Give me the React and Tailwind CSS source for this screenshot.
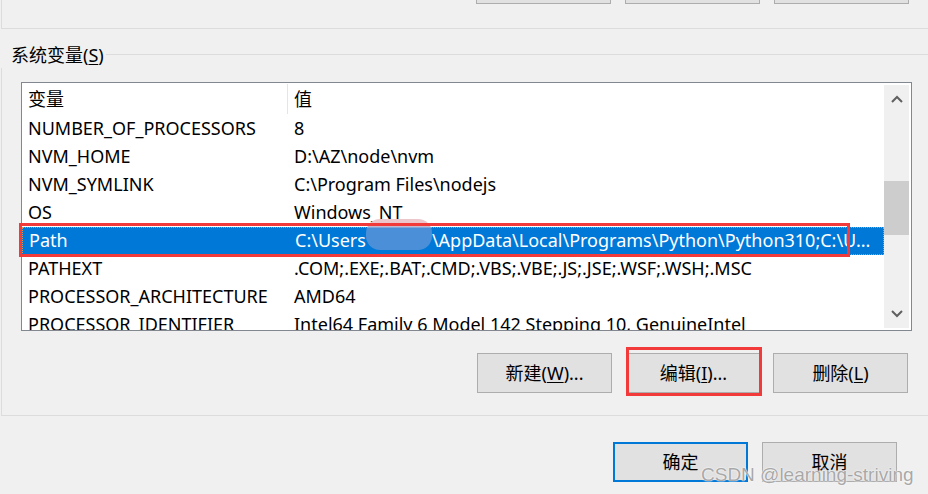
import React from 'react';

const rows = [
  { name: 'NUMBER_OF_PROCESSORS', value: '8' },
  { name: 'NVM_HOME', value: 'D:\\AZ\\node\\nvm' },
  { name: 'NVM_SYMLINK', value: 'C:\\Program Files\\nodejs' },
  { name: 'OS', value: 'Windows_NT' },
  { name: 'Path', value: 'path', selected: true },
  { name: 'PATHEXT', value: '.COM;.EXE;.BAT;.CMD;.VBS;.VBE;.JS;.JSE;.WSF;.WSH;.MSC' },
  { name: 'PROCESSOR_ARCHITECTURE', value: 'AMD64' },
  { name: 'PROCESSOR_IDENTIFIER', value: 'Intel64 Family 6 Model 142 Stepping 10, GenuineIntel' },
];

const Button = ({ children, className = '' }) => (
  <div
    className={`w-[135px] h-[40px] flex items-center justify-center bg-[#e1e1e1] border border-[#adadad] text-[18px] text-black ${className}`}
  >
    {children}
  </div>
);

const Chevron = ({ up }) => (
  <svg width="12" height="8" viewBox="0 0 12 8">
    <path
      d={up ? 'M1 7 L6 2 L11 7' : 'M1 1 L6 6 L11 1'}
      fill="none"
      stroke="#606060"
      strokeWidth="2"
    />
  </svg>
);

export default function App() {
  return (
    <div className="relative w-[928px] h-[494px] overflow-hidden bg-[#f0f0f0] text-black font-['Noto_Sans','Noto_Sans_CJK_SC',sans-serif]">
      {/* previous group (user variables), only its bottom is visible */}
      <div className="h-[29px] ml-[1px] border-l border-b border-[#dcdcdc] flex justify-end pr-[19px]">
        <div className="flex gap-[14px] -mt-[36px]">
          <Button />
          <Button />
          <Button />
        </div>
      </div>

      {/* system variables group */}
      <div className="mt-[25px] ml-[1px] h-[362px] border-t border-l border-b border-[#dcdcdc]">
        <div className="-mt-[13px] -ml-[2px] w-fit h-[26px] leading-[26px] bg-[#f0f0f0] pl-[11px] pr-[2px] text-[18px]">
          系统变量(<span className="underline underline-offset-2">S</span>)
        </div>

        {/* list view */}
        <div className="mt-[14px] ml-[19px] w-[891px] h-[249px] border border-[#828790] bg-white flex">
          <div className="flex-1 h-full overflow-hidden text-[18px]">
            <div className="h-[32px] flex items-center">
              <div className="w-[265px] pl-[6px]">变量</div>
              <div className="w-px h-[30px] bg-[#e5e5e5]" />
              <div className="pl-[6px]">值</div>
            </div>
            {rows.map((r) => (
              <div
                key={r.name}
                className={`h-[28px] pb-[2px] flex items-center whitespace-nowrap ${
                  r.selected ? 'bg-[#0078d7] text-white border border-dotted border-[#d89a50]' : ''
                }`}
              >
                <div className="w-[266px] shrink-0 pl-[6px]">{r.name}</div>
                <div className="pl-[6px] flex items-center">
                  {r.selected ? (
                    <>
                      <span>C:\Users</span>
                      <span className="inline-block w-[66px] h-[31px] -mt-[12px] rounded-[14px] bg-linear-to-b from-[#ecc6ca] from-[22%] to-[#4a8fd8] to-[30%]" />
                      <span>\AppData\Local\Programs\Python\Python310;C:\U...</span>
                    </>
                  ) : (
                    r.value
                  )}
                </div>
              </div>
            ))}
          </div>

          {/* scrollbar */}
          <div className="w-[25px] my-[2px] mr-[2px] bg-[#f0f0f0] flex flex-col">
            <div className="h-[28px] flex items-center justify-center">
              <Chevron up />
            </div>
            <div className="flex-1">
              <div className="mt-[68px] h-[54px] bg-[#cdcdcd]" />
            </div>
            <div className="h-[28px] flex items-center justify-center">
              <Chevron />
            </div>
          </div>
        </div>

        <div className="mt-[22px] flex pl-[475px]">
          <Button>
            新建(<span className="underline underline-offset-2">W</span>)...
          </Button>
          <Button className="ml-[14px]">
            编辑(<span className="underline underline-offset-2">I</span>)...
          </Button>
          <Button className="ml-[12px]">
            删除(<span className="underline underline-offset-2">L</span>)
          </Button>
        </div>
      </div>

      <div className="mt-[26px] flex justify-end pr-[31px] gap-[14px]">
        <Button className="!border-2 !border-[#0078d7]">确定</Button>
        <Button>取消</Button>
      </div>

      {/* red annotation boxes */}
      <div className="absolute left-[19px] top-[223px] w-[831px] h-[34px] border-[3px] border-[#f23a3a]" />
      <div className="absolute left-[626px] top-[347px] w-[136px] h-[49px] border-[3px] border-[#f23a3a]" />

      {/* watermark */}
      <div className="absolute left-[701px] top-[461px] text-[19px] text-[#a8a8a8] [text-shadow:0_0_2px_#ffffff,0_0_1px_#ffffff] font-['Liberation_Sans',sans-serif]">
        CSDN @learning-striving
      </div>
    </div>
  );
}
